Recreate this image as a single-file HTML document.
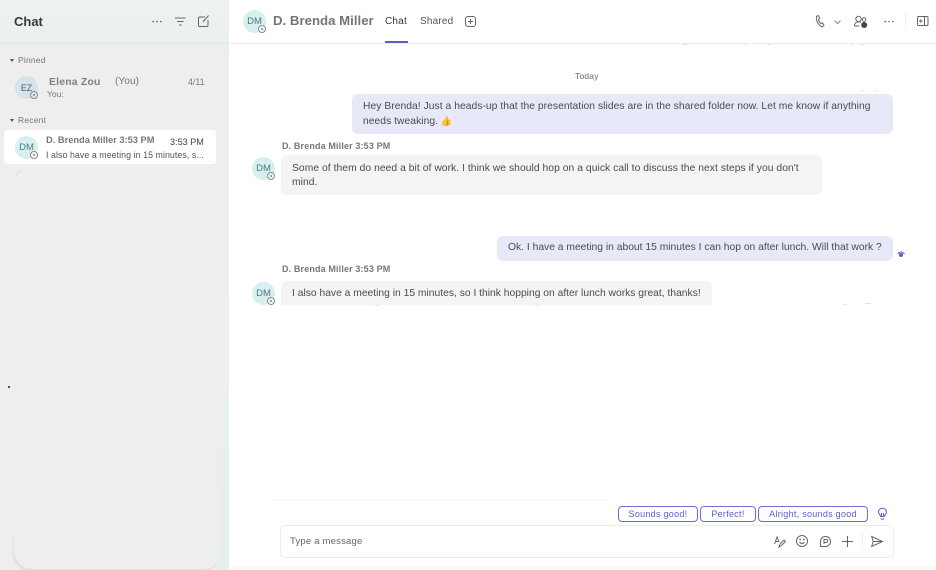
<!DOCTYPE html>
<html lang="en">
<head>
<meta charset="utf-8">
<title>Chat</title>
<style>
html,body{margin:0;padding:0;width:936px;height:570px;overflow:hidden;background:#fff;font-family:"Liberation Sans",sans-serif;color:#444}
*{box-sizing:border-box}
#root{position:absolute;left:0;top:0;width:936px;height:570px;overflow:hidden;background:#fff;filter:blur(.3px)}
.a{position:absolute;white-space:nowrap}
.side{position:absolute;left:0;top:0;width:229px;height:570px;background:linear-gradient(180deg,#f0f2f2 0,#e9efef 43px,#eeeeee 56px,#eeeeee 100%);overflow:hidden}
.sideedge{position:absolute;left:214px;top:300px;width:15px;height:270px;background:linear-gradient(180deg,#eef0f0 0,#e4efee 100%)}
.panel{position:absolute;left:0;top:44px;width:221px;height:526px;background:#eeeeee;border-radius:0 0 18px 0}
.panel2{position:absolute;left:14px;top:535px;width:207px;height:34px;background:#eeeeee;border-radius:0 0 18px 18px;box-shadow:-1px 2px 2px rgba(0,0,0,.07);clip-path:inset(0 -5px -5px -5px)}
.av{position:absolute;border-radius:50%;display:flex;align-items:center;justify-content:center;color:#4a7a80;background:#d8eff0;font-size:10px}
.bd{position:absolute;width:9px;height:9px}
.b{position:absolute;border-radius:6px;font-size:10.3px;line-height:14px;color:#4b4b4b;padding:5px 11px}
.me{background:#e8e9f8}
.ot{background:#f4f4f4}
.nm{font-size:9px;font-weight:bold;color:#777;letter-spacing:.14px}
.chip{position:absolute;top:506px;height:16px;border:1px solid #6a6fd0;border-radius:4px;color:#5a60c8;font-size:9px;line-height:15px;text-align:center;letter-spacing:.28px;background:#fff}
svg{position:absolute;overflow:visible;fill:none;stroke:#666;stroke-width:1}
.m{position:absolute;height:1px;background:#e4e4ea}
</style>
</head>
<body>
<div id="root">
<div class="side">
  <div class="sideedge"></div>
  <div class="panel"></div>
  <div class="panel2"></div>
  <div class="a" style="left:0;top:43px;width:229px;height:1px;background:#e6e9e9"></div>
  <div class="a" style="left:14px;top:14px;font-size:13px;font-weight:bold;color:#3a3a3a;line-height:15px">Chat</div>
  <svg style="left:152px;top:20px" width="10" height="3"><g fill="#555" stroke="none"><circle cx="1.200" cy="1.500" r=".8"/><circle cx="5" cy="1.500" r=".8"/><circle cx="8.800" cy="1.500" r=".8"/></g></svg>
  <svg style="left:175px;top:17px" width="11" height="9"><path d="M0 1h10.500M2 4.500h6.500M4 8h2.500"/></svg>
  <svg style="left:198px;top:15px" width="11" height="12"><path d="M7 2H1.500a1 1 0 0 0-1 1v7.500a1 1 0 0 0 1 1H9a1 1 0 0 0 1-1V5M5 7l5.500-6.500"/></svg>

  <div class="a" style="left:10px;top:59px;width:0;height:0;border-left:2.500px solid transparent;border-right:2.500px solid transparent;border-top:3.500px solid #555"></div>
  <div class="a" style="left:18px;top:55px;font-size:8.500px;color:#777;line-height:11px;letter-spacing:.2px">Pinned</div>
  <div class="av" style="left:15px;top:76px;width:23px;height:23px;background:#d6e3ea;color:#4a6070;font-size:8.800px">EZ</div>
  <svg class="bd" style="left:30px;top:91px"><circle cx="4" cy="4" r="3.500" fill="#eee" stroke="#888"/><path d="M2.800 2.800l2.400 2.400M5.200 2.800 2.800 5.200" stroke="#888" stroke-width=".7"/></svg>
  <div class="a" style="left:49px;top:76px;font-size:10.500px;font-weight:bold;color:#808080;line-height:12px;letter-spacing:.15px">Elena Zou</div>
  <div class="a" style="left:115px;top:76px;font-size:10px;color:#777;line-height:12px;letter-spacing:.1px">(You)</div>
  <div class="a" style="left:188px;top:77px;font-size:8.800px;color:#777;line-height:11px">4/11</div>
  <div class="a" style="left:47px;top:89px;font-size:8.500px;color:#777;line-height:11px">You:</div>

  <div class="a" style="left:10px;top:119px;width:0;height:0;border-left:2.500px solid transparent;border-right:2.500px solid transparent;border-top:3.500px solid #555"></div>
  <div class="a" style="left:18px;top:115px;font-size:8.500px;color:#777;line-height:11px;letter-spacing:.2px">Recent</div>
  <div class="a" style="left:4px;top:130px;width:212px;height:34px;background:#fff;border-radius:3px"></div>
  <div class="av" style="left:15px;top:136px;width:23px;height:23px;background:#d8eff0;color:#4a7a80;font-size:9.500px">DM</div>
  <svg class="bd" style="left:30px;top:151px"><circle cx="4" cy="4" r="3.500" fill="#fff" stroke="#888"/><path d="M2.800 2.800l2.400 2.400M5.200 2.800 2.800 5.200" stroke="#888" stroke-width=".7"/></svg>
  <div class="a" style="left:46px;top:135px;font-size:9.300px;font-weight:bold;color:#777;line-height:11px">D. Brenda Miller 3:53 PM</div>
  <div class="a" style="left:170px;top:137px;font-size:9.100px;color:#444;line-height:11px">3:53 PM</div>
  <div class="a" style="left:46px;top:149px;font-size:8.800px;color:#555;line-height:12px;letter-spacing:.07px">I also have a meeting in 15 minutes, s...</div>
  <div class="a" style="left:8px;top:386px;width:2px;height:2px;background:#222;border-radius:50%"></div>
  <svg style="left:16px;top:170px" width="6" height="6"><path d="M0 5 5 0" stroke="#ddd"/></svg>
</div>

<!-- header -->
<div class="a" style="left:229px;top:43px;width:707px;height:1px;background:#ececee"></div>
<div class="av" style="left:243px;top:10px;width:23px;height:23px;font-size:9.500px">DM</div>
<svg class="bd" style="left:258px;top:25px"><circle cx="4" cy="4" r="3.500" fill="#fff" stroke="#888"/><path d="M2.800 2.800l2.400 2.400M5.200 2.800 2.800 5.200" stroke="#888" stroke-width=".7"/></svg>
<div class="a" style="left:273px;top:13px;font-size:13.200px;font-weight:bold;color:#757575;line-height:16px;letter-spacing:.02px">D. Brenda Miller</div>
<div class="a" style="left:385px;top:15px;font-size:10px;color:#333;line-height:13px;letter-spacing:.2px">Chat</div>
<div class="a" style="left:385px;top:41px;width:23px;height:2px;background:#5b5fc7"></div>
<div class="a" style="left:420px;top:15px;font-size:10px;color:#555;line-height:13px;letter-spacing:.2px">Shared</div>
<svg style="left:465px;top:16px" width="11" height="11"><rect x=".5" y=".5" width="10" height="10" rx="2.500"/><path d="M5.500 3v5M3 5.500h5"/></svg>

<svg style="left:815px;top:15px" width="10" height="13"><path d="M1.500 1.200 3.400.6l1.300 2.800-1.200 1.100c.3 1.500 1.200 3 2.400 4l1.500-.6 1.600 2.300-1.500 1.500C4.800 11.700 .6 6.500 1.500 1.200z"/></svg>
<svg style="left:834px;top:20px" width="7" height="4"><path d="M.5.500 3.500 3.500 6.500.500" stroke="#888"/></svg>
<svg style="left:854px;top:15px" width="14" height="14"><circle cx="4.500" cy="4" r="2.700"/><path d="M.5 11c0-3 2-4.200 4-4.200 1 0 1.800.2 2.500.7M.5 11h5"/><circle cx="10" cy="4.500" r="1.800"/><circle cx="10.200" cy="10" r="3" fill="#444" stroke="none"/></svg>
<svg style="left:884px;top:20px" width="10" height="3"><g fill="#555" stroke="none"><circle cx="1.200" cy="1.500" r=".8"/><circle cx="5" cy="1.500" r=".8"/><circle cx="8.800" cy="1.500" r=".8"/></g></svg>
<div class="a" style="left:905px;top:13px;width:1px;height:17px;background:#eee"></div>
<svg style="left:917px;top:16px" width="12" height="10"><rect x=".5" y=".5" width="10.500" height="9" rx="1"/><path d="M7.500.500v9M2 5h3.500M3.700 3.300v3.400"/></svg>
<div class="m" style="left:682px;top:44px;width:6px"></div>
<div class="m" style="left:745px;top:44px;width:3px"></div>
<div class="m" style="left:768px;top:44px;width:3px"></div>
<div class="m" style="left:850px;top:44px;width:3px"></div>
<div class="m" style="left:860px;top:44px;width:5px"></div>

<!-- chat -->
<div class="a" style="left:575px;top:71px;font-size:8.500px;color:#666;line-height:11px;letter-spacing:.2px">Today</div>
<div class="m" style="left:860px;top:90px;width:5px;background:#eee"></div>
<div class="m" style="left:873px;top:90px;width:4px;background:#eee"></div>

<div class="b me" style="left:352px;top:94px;width:541px;height:40px;padding:6px 11px;letter-spacing:.04px">Hey Brenda! Just a heads-up that the presentation slides are in the shared folder now. Let me know if anything needs tweaking. <span style="color:#d9a441;font-size:9px">&#128077;</span></div>

<div class="a nm" style="left:282px;top:141px;line-height:11px">D. Brenda Miller 3:53 PM</div>
<div class="av" style="left:252px;top:157px;width:23px;height:23px;font-size:9.500px">DM</div>
<svg class="bd" style="left:267px;top:172px"><circle cx="4" cy="4" r="3.500" fill="#fff" stroke="#888"/><path d="M2.800 2.800l2.400 2.400M5.200 2.800 2.800 5.200" stroke="#888" stroke-width=".7"/></svg>
<div class="b ot" style="left:281px;top:155px;width:541px;height:40px;padding:7px 11px;letter-spacing:.05px">Some of them do need a bit of work. I think we should hop on a quick call to discuss the next steps if you don't mind.</div>

<div class="b me" style="left:497px;top:236px;width:396px;height:25px;white-space:nowrap">Ok. I have a meeting in about 15 minutes I can hop on after lunch. Will that work ?</div>
<svg style="left:897px;top:251px" width="8" height="7"><path d="M.5 3C2.500.5 5.500.5 7.500 3" stroke="#5b5fc7"/><circle cx="4" cy="4" r="2" fill="#5b5fc7" stroke="none"/></svg>

<div class="a nm" style="left:282px;top:264px;line-height:11px">D. Brenda Miller 3:53 PM</div>
<div class="av" style="left:252px;top:282px;width:23px;height:23px;font-size:9.500px">DM</div>
<svg class="bd" style="left:267px;top:297px"><circle cx="4" cy="4" r="3.500" fill="#fff" stroke="#888"/><path d="M2.800 2.800l2.400 2.400M5.200 2.800 2.800 5.200" stroke="#888" stroke-width=".7"/></svg>
<div class="b ot" style="left:281px;top:281px;width:431px;height:24px;padding:6px 11px;white-space:nowrap;border-radius:6px 6px 0 0">I also have a meeting in 15 minutes, so I think hopping on after lunch works great, thanks!</div>
<div class="a" style="left:229px;top:305px;width:707px;height:20px;background:#fff"></div>
<div class="m" style="left:375px;top:305px;width:5px"></div>
<div class="m" style="left:535px;top:305px;width:4px"></div>
<div class="m" style="left:843px;top:304px;width:4px"></div>
<div class="m" style="left:865px;top:303px;width:6px"></div>

<!-- suggestions -->
<div class="a" style="left:270px;top:499px;width:340px;height:1px;background:#f5f5f5"></div>
<div class="chip" style="left:618px;width:80px">Sounds good!</div>
<div class="chip" style="left:700px;width:56px">Perfect!</div>
<div class="chip" style="left:758px;width:110px">Alright, sounds good</div>
<svg style="left:878px;top:508px" width="9" height="12"><path stroke="#5b5fc7" d="M2.800 8.500C2.500 7 .5 6 .5 4a4 3.800 0 0 1 8 0C8.500 6 6.500 7 6.200 8.500zM3 10.500c.5 1 2.500 1 3 0M3.500 8V5M5.500 8V5"/></svg>

<!-- composer -->
<div class="a" style="left:280px;top:525px;width:614px;height:33px;border:1px solid #ececec;border-radius:5px;background:#fff"></div>
<div class="a" style="left:290px;top:536px;font-size:9.500px;color:#666;line-height:12px;letter-spacing:.2px">Type a message</div>
<svg style="left:774px;top:536px" width="12" height="12"><path d="M.5 8 3 1l2 5M1.500 5.500h3M5 11l1-3 4-4 1.500 1.500-4 4z"/></svg>
<svg style="left:796px;top:535px" width="12" height="12"><circle cx="6" cy="6" r="5.500"/><path d="M3.500 7c1 2 4 2 5 0"/><circle cx="4.200" cy="4.500" r=".4"/><circle cx="7.800" cy="4.500" r=".4"/></svg>
<svg style="left:820px;top:536px" width="11" height="11"><path d="M.5 10.500V5.500a5 5 0 1 1 5 5z"/><path d="M4 8V3.500h2.200a1.300 1.300 0 0 1 0 3H4"/></svg>
<svg style="left:842px;top:536px" width="11" height="11"><path d="M5.500 0v11M0 5.500h11"/></svg>
<div class="a" style="left:862px;top:533px;width:1px;height:17px;background:#eee"></div>
<svg style="left:871px;top:536px" width="12" height="11"><path d="M.7.500 11.500 5.500.7 10.500l1.500-5zM2.200 5.500h9.300"/></svg>
<div class="a" style="left:229px;top:566px;width:707px;height:4px;background:#fafafa"></div>
</div>
</body>
</html>
